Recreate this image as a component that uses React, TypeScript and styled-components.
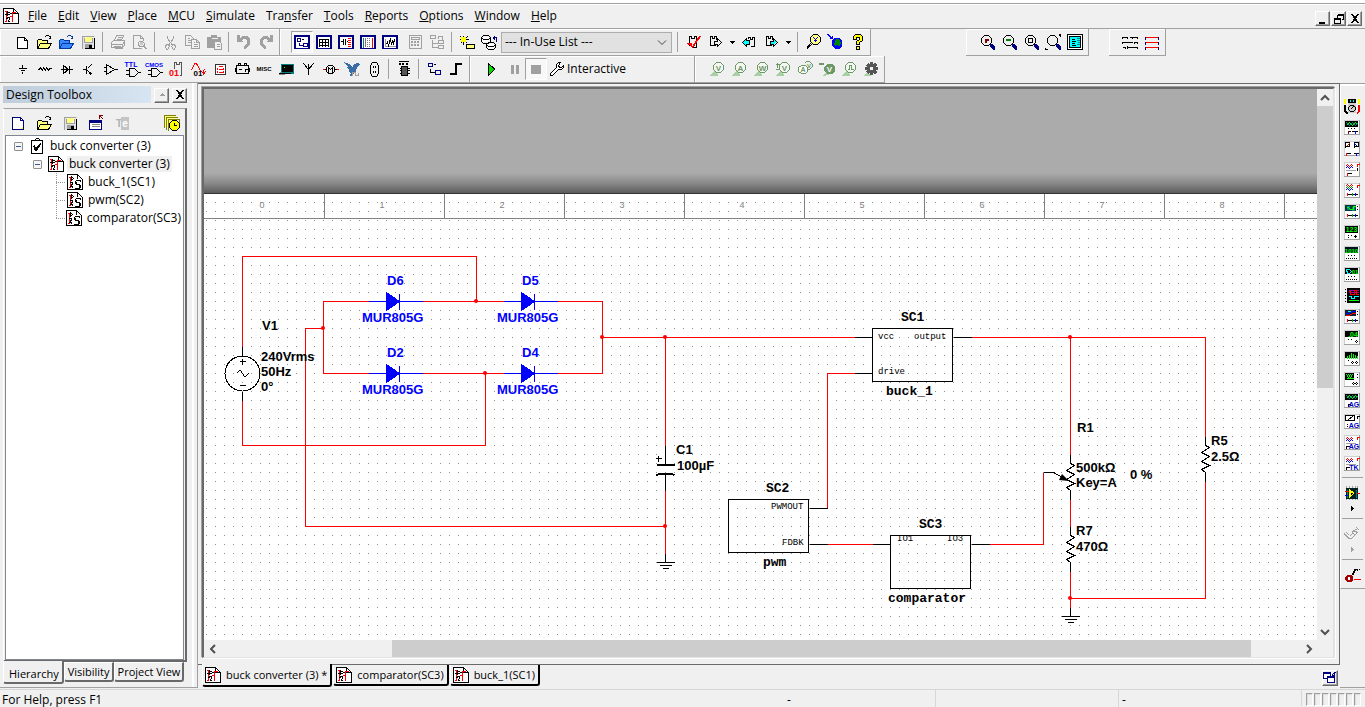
import React from 'react';
import styled, { createGlobalStyle, css } from 'styled-components';

const face = '#f0f0f0';
const edge = '#a0a0a0';
const dark = '#696969';

const Global = createGlobalStyle`
  * { box-sizing: border-box; }
  html, body { margin: 0; }
  body { font: 12px/16px "Open Sans", "Noto Sans", sans-serif; color: #000; background: ${face}; }
  button, select { font: inherit; color: inherit; }
`;

/* ---------- icons: 16x16 layered pixel drawings ---------- */

type Layer = ['s' | 'f', string, string] | ['t', string, string, number, number, number];

const K = '#000';
const N = '#000080';
const G = '#a0a0a0';
const R = '#f00';
const B = '#00f';
const L = '#0f0';
const GP = '#6f9868';

const sheetArt: Layer[] = [
  ['f', '#fff', 'M0 0H11L16 5V16H0Z'],
  ['s', K, 'M0 0H10L15 5V15H0Z M10 0V5H15'],
  ['s', R, 'M1 3H3V13H1 M9 13V4H12 M6 8H9'],
  ['s', K, 'M1 6H4 M4 3V7L7 5L4 3 M6 5H8 M4 9L3 11 M4 9H6V11L4 14 M5 12L7 14'],
];
const subSheetArt: Layer[] = [
  ['f', '#fff', 'M0 0H11L16 5V16H0Z'],
  ['s', K, 'M0 0H10L15 5V15H0Z M10 0V5H15'],
  ['s', R, 'M1 3H3V13H1'],
  ['s', K, 'M4 2V6L6 4Z M2 8H5 M5 9L3 13 M4 11L6 14'],
  ['f', '#fff', 'M7 5H15V15H7Z'],
  ['s', K, 'M13 7V6H9L8 7V9L9 10H12L13 11V13L12 14H8V13 M9 7V10 M12 10V13'],
];
const panel = (screen: string, inner: Layer[], foot: Layer[]): Layer[] => [
  ['f', '#fff', 'M0 0H16V15H0Z'],
  ['f', '#a0a0a0', 'M15 0H16V15H0V14H15Z'],
  ['f', '#d0d0d0', 'M0 0H15V1H1V14H0Z'],
  ['f', screen, 'M1 1H14V7H1Z'],
  ...inner,
  ...foot,
];
const rgbDots: Layer[] = [
  ['s', K, 'M2 11H13'],
  ['f', R, 'M3 10h1v3h-1z'],
  ['f', '#0a0', 'M8 10h1v3h-1z'],
  ['f', B, 'M11 10h1v3h-1z'],
];
const binDots: Layer[] = [['f', K, 'M4 9h1v1h-1z M7 9h1v1h-1z M10 9h1v1h-1z M2 12h1v1h-1z M4 12h1v1h-1z M6 12h1v1h-1z M8 12h1v1h-1z M10 12h1v1h-1z M12 12h1v1h-1z']];
const probe = (letter: string, extra: Layer[] = []): Layer[] => [
  ['f', '#a9cfa5', 'M1 15L5 10L9 14V15Z'],
  ['f', '#f4f8f3', 'M6 2H12L14 5V9L12 12H7L4 9V5Z'],
  ['s', GP, 'M7 1H11L14 4V8L11 11H7L4 8V4Z'],
  ['t', GP, letter, 9.5, 9.5, 8],
  ...extra,
];
const windowFrame: Layer[] = [
  ['f', '#fff', 'M0 1H16V15H0Z'],
  ['s', N, 'M0 1H15V14H0Z M0 2H15 M1 1V14 M14 1V14'],
];
const lens = (inner: Layer[]): Layer[] => [
  ['s', K, 'M5 1H9L12 4V8L9 11H5L2 8V4Z'],
  ['f', N, 'M11 10H13L16 13V16H14L11 13Z'],
  ...inner,
];
const gate: Layer[] = [
  ['s', K, 'M1 9H5 M1 13H5 M5 7H10L14 11L10 15H5Z M14 11H16'],
];

const art: Record<string, Layer[]> = {
  sheet: sheetArt,
  subSheet: subSheetArt,
  newFile: [['f', '#fff', 'M3 3H11L14 6V15H3Z'], ['s', K, 'M3 3H10L13 6V14H3Z M10 3V6H13']],
  newSheet: [
    ['f', '#fff', 'M2 2H10L14 6V15H2Z'],
    ['s', N, 'M2 2H10L13 5V14H2Z M10 2V5H13'],
    ['f', '#ff0', 'M13 11V14H10Z'],
  ],
  open: [
    ['f', '#ffff80', 'M1 15V6H6L7 7H12V10H16L12 15Z'],
    ['s', K, 'M1 14V6L2 5H5L6 6H11V9 M1 14L4 9H15L12 14Z M8 3L10 1H12L14 3 M14 1V4 M12 4H14'],
  ],
  openBlue: [
    ['f', '#3a86ff', 'M1 15V6H6L7 7H12V10H16L12 15Z'],
    ['s', '#003a9c', 'M1 14V6L2 5H5L6 6H11V9 M1 14L4 9H15L12 14Z M8 3L10 1H12L14 3 M14 1V4 M12 4H14'],
  ],
  save: [
    ['f', '#e4e4e4', 'M2 2H15V15H2Z'],
    ['f', '#fff', 'M5 2H13V8H5Z'],
    ['f', '#ffff80', 'M5 4L8 2H12V5L9 8H5Z'],
    ['s', G, 'M2 14V2H13 M4 3V8H12V3'],
    ['s', K, 'M14 3V14H4'],
    ['f', '#a0a0a0', 'M5 10H12V14H5Z'],
    ['f', K, 'M9 11H12V14H9Z'],
  ],
  print: [
    ['s', G, 'M4 6L6 1H13L11 6 M7 3H11 M6 5H10 M1 8L3 6H14V11L12 13H1Z M1 10H12V13 M12 10L14 7 M3 12H10 M4 14H12'],
  ],
  preview: [
    ['s', G, 'M9 14H1V1H8L11 4V6 M8 1V4H11 M7 7H10L12 9V11L10 12H7L6 10V8Z M12 12L15 15 M12 13L14 15'],
    ['f', '#c8c8c8', 'M8 8H11V11H8Z'],
  ],
  cut: [['s', G, 'M5 1V4L8 8L11 12 M11 1V4L8 8L5 12 M4 10H6L7 12L5 15H4L3 12Z M11 10H12L13 12L12 15H11L9 12Z']],
  copy: [
    ['s', G, 'M1 1H6L9 4V11H1Z M3 4H5 M3 6H7 M3 8H7'],
    ['f', face, 'M7 5H15V15H7Z'],
    ['s', G, 'M7 5H12L15 8V14H7Z M12 5V8H15 M9 8H10 M9 10H13 M9 12H13'],
  ],
  paste: [
    ['f', G, 'M1 3H5V1H11V3H15V14H1Z'],
    ['s', face, 'M5 4H11'],
    ['f', face, 'M8 7H13L16 10V16H8Z'],
    ['s', G, 'M8 7H13L15 9V15H8Z M10 10H13 M10 12H13'],
  ],
  undo: [['f', G, 'M1 1H4V4L7 2H11L14 5V10L10 15H8V13L11 9V6L9 5H7L6 7L8 8H1Z']],
  redo: [['f', G, 'M15 1H12V4L9 2H5L2 5V10L6 15H8V13L5 9V6L7 5H9L10 7L8 8H15Z']],
  hierarchy: [...windowFrame, ['s', N, 'M3 4H6V7H3Z M9 9H13V12H9Z M5 8V11H9'], ['s', K, 'M7 5H9']],
  grid: [...windowFrame, ['s', K, 'M3 4V12 M6 4V12 M9 4V12 M12 4V12 M3 5H12 M3 8H12 M3 11H12']],
  netlist: [...windowFrame, ['s', K, 'M2 7H4 M5 4V10 M7 4V10 M8 7H9'], ['f', R, 'M10 4h3v1h-3z M10 6h3v1h-3z M10 8h3v1h-3z M10 10h3v1h-3z M10 12h3v1h-3z']],
  bom: [...windowFrame, ['s', '#008080', 'M3 3V13'], ['s', R, 'M12 3V13'], ['f', '#777', 'M5 4h1v9h-1z M7 4h1v9h-1z M9 4h1v9h-1z'], ['s', '#fff', 'M5 5H10 M5 7H10 M5 9H10 M5 11H10']],
  grapher: [...windowFrame, ['s', '#999', 'M3 4V12H13'], ['s', K, 'M4 10L5 8L6 11L8 4L9 10L10 7L11 9L12 5']],
  calc: [['s', G, 'M2 1H14V14H2Z M4 3H12V5H4Z'], ['f', G, 'M4 7h2v2h-2z M7 7h2v2h-2z M10 7h2v2h-2z M4 10h2v2h-2z M7 10h2v2h-2z M10 10h2v2h-2z']],
  branch: [['s', G, 'M1 1H6V4H1Z M3 5V13H8 M3 9H8 M9 6H14V9H9Z M9 11H14V14H9Z M8 2H13V5 M9 1V4']],
  wizard: [['s', K, 'M4 1V10 M0 5H9 M1 2L8 9 M8 2L1 9'], ['f', '#ff0', 'M2 3H7V8H2Z'], ['f', '#ffff80', 'M7 11H15V15H7Z'], ['s', K, 'M7 10H15V14H7Z']],
  database: [
    ['f', '#fff', 'M1 3H8V8H1Z M6 10H13V15H6Z'],
    ['s', K, 'M2 1H7L9 3V7L7 9H2L0 7V3Z M0 3L2 5H7L9 3 M7 8H12L14 10V13L12 15H7L5 13V10Z M5 10L7 12H12L14 10'],
    ['s', N, 'M11 3H15 M12 2V4 M13 1V5 M15 3V7'],
  ],
  erc: [['s', K, 'M4 11V2H6V4H9V2H11V13H6'], ['s', R, 'M15 2L7 13L3 9 M14 2L7 12L2 9'], ['f', R, 'M3 9H7V14Z']],
  toPcb: [['s', K, 'M3 11V2H5V4H7V2H9V5 M3 11H8 M7 7H10V4L14 8L10 12V10H7Z']],
  backAnn: [['f', '#0ff', 'M1 8L5 5V7H9V10H5V12Z'], ['s', K, 'M1 8L5 4V6H8V10H5V12Z M7 4V3H9V5H11V3H13V12H9']],
  forwardAnn: [['f', '#0ff', 'M7 7H10V5L14 8L10 11V10H7Z'], ['s', K, 'M3 11V2H5V4H7V2H9V5 M3 11H8 M7 7H10V4L14 8L10 12V10H7Z']],
  caret: [['f', K, 'M5 7H11L8 10Z']],
  find: [['f', '#ffff80', 'M8 1H13L15 4V8L12 11H8L5 8V4Z'], ['s', K, 'M8 0H12L15 3V7L12 10H8L5 7V3Z M5 9L1 14 M6 10L1 15'], ['s', B, 'M8 3L10 5L12 3 M8 7L10 5L12 7 M10 4V7']],
  web: [['f', B, 'M7 4H12L15 7V12L12 15H8L5 12V7Z'], ['f', '#080', 'M9 5H12L14 9L12 13L10 11L8 12L6 10L8 8Z'], ['s', B, 'M0 0L5 4 M5 1V4H2 M1 0L4 3']],
  help: [['f', '#ff0', 'M4 5V2L6 0H11L13 2V6L10 9V11H7V8L10 5V3H8L7 5Z M7 12H10V15H7Z'], ['s', K, 'M4 5V2L6 0H11L13 2V6L10 8V10H7V7L10 5V3H7V5H4Z M7 12H10V15H7Z']],
  zoomIn: lens([['s', '#800000', 'M5 6H9 M7 4V8 M6 4V8 M5 5H9']]),
  zoomOut: lens([['f', '#008000', 'M5 5H10V7H5Z']]),
  zoomArea: lens([['s', K, 'M5 4H9V8H5Z']]),
  zoomFit: lens([['s', K, 'M13 0H15V2 M15 0L13 2 M0 13V15H2']]),
  fullScreen: [['f', '#fff', 'M1 1H15V15H1Z'], ['s', K, 'M0 0H15V15H0Z M2 2H13V13H2Z'], ['f', '#0ff', 'M3 3H13V13H3Z'], ['s', K, 'M4 5H7 M4 7H8 M4 9H7 M4 11H8'], ['s', '#008080', 'M9 4H12 M9 6H12 M10 8H12 M9 10H12']],
  wires: [['s', K, 'M0 3H5 M7 3H9 M10 3H15 M5 2V4 M10 2V4 M0 8H10 M12 7V9 M12 8H15 M0 2V4 M0 7V9 M15 2V4 M15 7V9 M0 13H2 M5 13H15 M3 12V14 M15 12V14 M4 12H5V14H4']],
  buses: [['s', R, 'M1 3H14 M1 8H14 M1 13H14'], ['s', N, 'M1 2V5 M14 2V5 M1 7V10 M14 7V10 M1 12V15 M14 12V15']],
  battery: [['s', K, 'M8 3V6 M4 7H12 M6 9H10 M8 10V12']],
  resistor: [['s', K, 'M1 8H3L4 6L6 9L7 6L9 9L10 6L12 9L13 7H15']],
  diode: [['s', K, 'M2 8H14 M5 4V12L10 8Z M11 4V12']],
  transistor: [['s', K, 'M2 8H6 M6 4V12 M7 7L11 3 M7 9L11 13 M10 10V13 M8 12H11']],
  opamp: [['s', K, 'M4 3V13L12 8Z M1 6H4 M1 10H4 M12 8H15']],
  ttl: [['t', B, 'TTL', 7, 6, 7], ...gate],
  cmos: [['t', B, 'CMOS', 8, 6, 6], ...gate],
  mixedPort: [['s', '#555', 'M6 7V1H8V3H11V1H13V14H11'], ['t', R, '01', 6, 15, 9]],
  mixed: [['s', R, 'M1 9L4 2H6L10 9L12 11L14 8'], ['t', K, '01', 8, 15, 8], ['s', R, 'M13 9V13L15 10']],
  indicator: [['f', '#fff', 'M3 3H14V14H3Z'], ['s', '#333', 'M3 3H13V13H3Z'], ['s', R, 'M6 5H10 M6 8H10 M6 11H10 M5 6V8 M11 6V8 M5 9V11 M11 9V11']],
  power: [['s', K, 'M2 4H14V12H2Z M4 8H7 M10 8H13 M11 7V10 M4 3V2H6V3 M10 3V2H12V3 M1 6V10 M15 6V10']],
  misc: [['t', K, 'MISC', 8, 10, 6]],
  peripheral: [['f', '#008080', 'M3 3H16V13H3Z'], ['f', K, 'M4 4H15V11H4Z'], ['s', '#888', 'M0 13H6 M1 11H3'], ['f', L, 'M6 6h1v1h-1z'], ['s', K, 'M0 12H12']],
  rf: [['s', K, 'M8 4V13 M3 2L8 8L13 2 M8 2V4']],
  motor: [['s', R, 'M0 8H2 M14 8H16'], ['s', K, 'M2 8H4 M12 8H14 M6 4H10L12 6V10L10 12H6L4 10V6Z M6 11V6L8 8L10 6V11']],
  niBird: [['f', '#3a6ea5', 'M0 1L5 3L9 6L10 3L13 2L16 3L13 6L12 10L9 14L6 15L7 12L4 10L6 9L2 6L4 6Z'], ['s', G, 'M8 14V11H11V14H14V11']],
  connector: [['s', K, 'M6 1H10L12 4V12L10 15H6L4 12V4Z M7 4V6 M9 4V6 M7 9V11 M9 9V11']],
  mcu: [['f', K, 'M3 0H13V1H3Z M3 2H5V4H3Z M6 2H8V4H6Z M10 2H12V4H10Z'], ['f', '#555', 'M5 6H12V15H5Z'], ['s', K, 'M5 5H11V14H5Z M3 7H5 M3 9H5 M3 12H5 M11 7H13 M11 9H13 M11 12H13']],
  hierBlock: [['s', N, 'M2 2H6V5H2Z M9 9H14V13H9Z'], ['s', K, 'M4 7V11H8'], ['s', K, 'M7 3H9']],
  bus: [['f', K, 'M2 12H7V2H14V4H9V14H2Z']],
  play: [['f', K, 'M4 2L12 8L4 15Z'], ['f', '#00e000', 'M5 4L10 8L5 13Z']],
  pause: [['f', G, 'M5 4H8V13H5Z M10 4H13V13H10Z']],
  stop: [['f', G, 'M3 4H13V13H3Z']],
  wrench: [['f', '#fff', 'M9 2H12V6H14V8L12 9H9L3 15H1V13L7 7V4Z'], ['s', K, 'M11 1H9L7 3V6L1 12V14H3L9 8H12L14 6V4L12 6H10L9 4Z']],
  probeV: probe('V'),
  probeA: probe('A'),
  probeW: probe('W'),
  probeDiff: probe('V', [['s', GP, 'M0 3H4 M2 1V6 M0 8H4']]),
  probeVA: [
    ['s', GP, 'M9 0H12L15 3V5L12 8H9 M9 0L7 2'],
    ['t', GP, 'V', 12, 7, 6],
    ['f', '#fff', 'M3 5H8L10 8V11L8 13H4L1 10Z'],
    ['s', GP, 'M4 4H8L10 6V10L8 12H4L1 10V6Z'],
    ['t', GP, 'A', 6, 11, 7],
  ],
  probeRef: [['f', '#a9cfa5', 'M4 15L7 11L10 14Z'], ['f', GP, 'M8 3H13L16 6V10L13 13H8L5 10V6Z M0 2H5V4H0Z'], ['t', '#fff', 'V', 10.5, 11, 8]],
  probeDigital: probe('', [['s', GP, 'M6 8H8V4H10V8H12']]),
  gear: [['f', '#a9cfa5', 'M0 15L4 11L8 15Z'], ['f', '#555', 'M7 1H10V3L12 2L14 4L13 6H15V9H13L14 11L12 13L10 12V14H7V12L5 13L3 11L4 9H2V6H4L3 4L5 2L7 3Z'], ['f', face, 'M7 6H10V9H7Z']],
  blocksWindow: [['f', '#fff', 'M1 5H14V15H1Z'], ['s', N, 'M1 5H13V14H1Z M1 6H13 M1 7H13'], ['s', '#888', 'M3 9H11 M3 11H11'], ['s', '#800000', 'M15 4L11 0 M11 0V3 M11 0H14']],
  rename: [['t', '#b4b4b4', 'T', 5, 12, 11], ['f', '#c4c4c4', 'M7 2H15V15H7Z'], ['t', '#fff', 'e', 11, 12, 10]],
  history: [
    ['f', '#ffff80', 'M0 0H11V12H0Z'],
    ['s', '#808000', 'M0 12V0H11 M2 14V2H13 M4 15V4H15V7'],
    ['f', '#ff0', 'M8 6H13L15 8V13L13 15H8L6 13V8Z'],
    ['s', K, 'M8 5H12L15 8V12L12 15H8L5 12V8Z M10 7V10H12'],
  ],
  checkSheet: [
    ['f', '#fff', 'M3 2H14V15H3Z'],
    ['s', K, 'M2 2H13V15H2Z M5 2L7 0H9L11 2'],
    ['f', K, 'M4 8L6 7L7 10L11 5L12 6L8 13H6Z'],
  ],
  cascade: [['f', '#fff', 'M1 2H10V10H1Z'], ['s', N, 'M1 2H8V8H1Z M1 3H8'], ['f', '#fff', 'M5 6H13V13H5Z'], ['s', N, 'M5 6H12V12H5Z M5 7H12 M12 1V5H9 M14 1L10 4']],
  /* instruments */
  multimeter: [
    ['f', '#ff0', 'M0 0H2V5H0Z M14 0H16V5H14Z'],
    ['f', K, 'M0 6H2V12L4 14L3 15L0 13Z'],
    ['f', R, 'M14 6H16V13L13 15L12 14L14 12Z'],
    ['f', '#d0d0d0', 'M4 0H12V14H4Z'],
    ['f', K, 'M4 0H12V4H4Z'],
    ['f', '#0ff', 'M6 1h1v2h-1z M9 1h1v2h-1z'],
    ['s', K, 'M6 6H9L11 8V10L9 12H6L4 10V8Z M6 10L9 7'],
  ],
  functionGen: panel(K, [['s', '#008080', 'M2 2L5 5L8 2L11 5L13 3'], ['s', L, 'M2 5L5 2L8 5L11 2L13 4']], [['s', K, 'M3 11H13'], ['s', '#800', 'M4 10V13'], ['s', B, 'M11 10V13'], ['f', '#fff', 'M7 11h1v1h-1z'], ['f', K, 'M4 8h1v1h-1z M7 8h1v1h-1z M10 8h1v1h-1z']]),
  wattmeter: panel('#fff', [['s', K, 'M1 1H5V5H1Z M10 1H14V5H10Z M1 0V6 M10 0V6'], ['s', R, 'M2 5L5 2'], ['s', B, 'M10 2L13 5']], [['s', K, 'M1 12H6 M9 12H14'], ['s', R, 'M2 11V14'], ['s', B, 'M12 11V14']]),
  scope2: panel('#fff', [['s', R, 'M1 4L3 2L5 4L7 2L9 4'], ['s', B, 'M1 6L3 4L5 6L7 4L9 6'], ['s', R, 'M12 2H15 M13 1V4'], ['s', K, 'M13 5V8']], [['s', G, 'M1 8H11'], ['s', K, 'M2 11H7'], ['s', R, 'M3 10V13']]),
  scope4: panel('#fff', [['s', R, 'M1 3L3 1L5 3L7 1L9 3'], ['s', '#0a0', 'M1 5L3 3L5 5L7 3L9 5'], ['s', B, 'M1 7L3 5L5 7L7 5L9 7'], ['s', R, 'M12 2H15 M13 1V4']], rgbDots),
  bode: panel('#003838', [['f', '#008080', 'M3 2H6V6H3Z M8 3H11V7H8Z'], ['s', L, 'M2 3H4L6 5H9V2H11'], ['f', '#fff', 'M12 1H14V7H12Z'], ['f', K, 'M13 2h1v1h-1z M13 5h1v1h-1z']], rgbDots),
  counter: panel(K, [['f', K, 'M1 1H14V8H1Z'], ['t', L, '123', 7.5, 7, 7]], [['f', K, 'M4 10h1v1h-1z M4 12h1v1h-1z M7 10h1v1h-1z M11 10h1v3h-1z M10 11h3v1h-3z']]),
  wordGen: panel('#012', [['t', L, '1010', 7.5, 7, 6]], binDots),
  logicConv: panel(K, [['s', '#0ff', 'M2 2H5L7 4L5 6H3Z'], ['t', L, '01', 11, 7, 6]], binDots),
  logicAnalyzer: [['f', K, 'M3 0H16V15H3Z'], ['s', '#a0a', 'M4 2H14 M4 4H14'], ['s', R, 'M4 3H6V6H10V2H12V6H14'], ['s', '#0ff', 'M4 8H7V10H10V8H14'], ['s', L, 'M4 12H14'], ['f', K, 'M1 1h1v1h-1z M1 4h1v1h-1z M1 7h1v1h-1z M1 10h1v1h-1z M1 13h1v1h-1z']],
  ivAnalyzer: panel('#123', [['s', '#00f', 'M1 4H5L8 2H11'], ['s', R, 'M1 6H5L8 4H11'], ['s', '#0ff', 'M3 2H6'], ['f', '#fff', 'M12 1H14V7H12Z'], ['f', K, 'M13 2h1v1h-1z M13 5h1v1h-1z']], rgbDots),
  distortion: panel(K, [['t', L, '.04', 9, 7, 7]], [['f', K, 'M4 9h1v1h-1z M7 9h1v1h-1z'], ['s', K, 'M12 10L13 11L12 12L11 11Z']]),
  spectrum: panel(K, [['s', L, 'M3 4V7 M5 3V7 M7 1V7 M9 2V7 M11 3V7 M13 4V7']], [['s', K, 'M8 10L9 11L8 12L7 11Z M12 10L13 11L12 12L11 11Z'], ['f', K, 'M4 9h1v1h-1z']]),
  network: panel('#fff', [['f', K, 'M1 1H10V8H1Z'], ['s', L, 'M2 2L4 5L6 2L8 5 M2 5L4 2L6 5L8 2 M2 6H9'], ['f', K, 'M13 2h1v1h-1z M13 5h1v1h-1z']], [['s', K, 'M9 10L10 11L9 12L8 11Z M12 10L13 11L12 12L11 11Z']]),
  agGen: panel(K, [['s', '#008080', 'M2 2L5 5L8 2L11 5L13 3'], ['s', L, 'M2 5L5 2L8 5L11 2L13 4']], [['s', K, 'M3 11H6 M4 10V13'], ['t', '#00c', 'AG', 10, 14, 7]]),
  agMeter: panel('#fff', [['s', K, 'M1 1H10V6H1Z M3 6L9 1 M12 2H15 M13 1V4']], [['f', K, 'M3 10h1v1h-1z M3 12h1v1h-1z'], ['t', '#00c', 'AG', 10, 14, 7]]),
  agScope: panel('#fff', [['s', R, 'M1 4L3 2L5 4L7 2L9 4 M12 2H15 M13 1V4'], ['s', B, 'M1 6L3 4L5 6L7 4L9 6']], [['s', G, 'M1 8H11'], ['s', K, 'M1 11H5 M2 10V13'], ['t', '#00c', 'AG', 10, 14, 7]]),
  tkScope: panel('#fff', [['s', R, 'M1 4L3 2L5 4L7 2L9 4 M12 2H15 M13 1V4'], ['s', B, 'M1 6L3 4L5 6L7 4L9 6']], [['s', G, 'M1 8H11'], ['s', K, 'M1 11H5 M2 10V13'], ['t', '#00c', 'TK', 10, 14, 7]]),
  labview: [['f', G, 'M2 1h1v14h-1z M5 1h1v14h-1z M8 1h1v14h-1z M11 1h1v14h-1z M13 1h1v14h-1z'], ['f', '#022', 'M2 3H14V14H2Z'], ['s', '#008080', 'M3 4V12 M12 4V12'], ['f', '#ff0', 'M5 4L11 8L5 13Z'], ['s', K, 'M6 8H8 M7 7V9'], ['s', R, 'M0 6H4 M12 8H15'], ['s', B, 'M0 10H4']],
  rightDark: [['f', K, 'M7 4L10 7.5L7 11Z']],
  rightDim: [['f', G, 'M7 4L10 7.5L7 11Z']],
  clampDim: [['s', G, 'M0 7L5 12L7 12L13 6L9 4 M5 10L8 7L9 4 M2 6L5 9 M9 4L14 2 M8 4V7L11 8 M12 1L15 4 M0 8L5 13']],
  currentClamp: [['f', '#a00000', 'M3 8H7L9 10V13L7 15H3L1 13V10Z'], ['f', '#fff', 'M4 10H6V13H4Z'], ['s', R, 'M9 12H16'], ['s', K, 'M7 8L9 5L10 2 M8 8L10 5L11 2H13 M13 1V3 M15 1V2']],
  min: [['f', K, 'M4 11H10V13H4Z']],
  restore: [['s', K, 'M6 3H12V8H10 M6 4H12 M6 3V6 M3 7H9V12H3Z M3 8H9']],
  close: [['f', K, 'M4 3H6L8 6L10 3H12L9 7.5L12 12H10L8 9L6 12H4L7 7.5Z']],
  up: [['f', G, 'M5 9H11L8 6Z']],
};

const Svg = styled.svg`
  display: block;
  flex: none;
`;

function Icon({ name }: { name: string }) {
  return (
    <Svg width="16" height="16" viewBox="0 0 16 16" aria-hidden="true" overflow="visible">
      {art[name].map((l, i) =>
        l[0] === 't' ? (
          <text key={i} x={l[3]} y={l[4]} fontSize={l[5]} fill={l[1]} textAnchor="middle" fontFamily="Liberation Sans, sans-serif" fontWeight="bold">
            {l[2]}
          </text>
        ) : l[0] === 's' ? (
          <path key={i} d={l[2]} fill="none" stroke={l[1]} transform="translate(.5 .5)" shapeRendering="crispEdges" />
        ) : (
          <path key={i} d={l[2]} fill={l[1]} shapeRendering="crispEdges" />
        ),
      )}
    </Svg>
  );
}

/* ---------- shell ---------- */

const Page = styled.div`
  display: flex;
  flex-direction: column;
  min-height: 100vh;
  background: ${face};
`;

const MenuBar = styled.nav`
  display: flex;
  align-items: center;
  height: 26px;
  margin-top: 3px;
  padding: 0 3px;
  border-top: 1px solid ${edge};
  border-bottom: 1px solid ${edge};
  box-shadow: inset 0 1px #fff, 0 -3px #fff;
`;

const MenuList = styled.div`
  display: flex;
  flex: 1;
  margin-left: 4px;
`;

const MenuItem = styled.button`
  border: 0;
  padding: 0 6px 0 5px;
  background: none;
`;

const bevel = css`
  border: 1px solid;
  border-color: #fff ${dark} ${dark} #fff;
  box-shadow: inset -1px -1px ${edge};
  background: ${face};
`;

const WindowButton = styled.button`
  display: flex;
  align-items: center;
  justify-content: center;
  width: 15px;
  height: 15px;
  padding: 0;
  margin-left: 1px;
  overflow: hidden;
  ${bevel}
`;

const WindowButtons = styled.div`
  display: flex;
  align-self: flex-end;
  padding-bottom: 2px;
`;

const ToolRow = styled.div`
  display: flex;
  height: 27px;
`;

const Toolbar = styled.div<{ $lead?: number; $gap?: number }>`
  display: flex;
  align-items: center;
  padding-left: ${(p) => p.$lead ?? 11}px;
  padding-right: 2px;
  margin-left: ${(p) => p.$gap ?? 0}px;
  border-right: 1px solid ${edge};
  border-bottom: 1px solid ${edge};
  box-shadow: inset 1px 1px #fff;
`;

const ToolButton = styled.button<{ $on?: boolean; $slim?: boolean }>`
  display: flex;
  align-items: center;
  justify-content: center;
  width: ${(p) => (p.$slim ? 12 : 22)}px;
  height: 22px;
  padding: 0;
  border: 1px solid;
  border-color: ${(p) => (p.$on ? `${edge} #fff #fff ${edge}` : 'transparent')};
  background: ${(p) => (p.$on ? '#f8f8f8' : 'none')};
  overflow: hidden;
`;

const Separator = styled.span`
  width: 1px;
  height: 20px;
  margin: 0 4px 0 3px;
  background: ${edge};
`;

const Gap = styled.span`
  width: 3px;
`;

const SelectWrap = styled.label`
  position: relative;
  display: flex;
  margin: 0 2px 0 1px;
  color: #444;
`;

const PartSelect = styled.select`
  width: 171px;
  height: 21px;
  padding: 0 3px;
  border: 1px solid #adadad;
  border-radius: 0;
  background: #e1e1e1;
  appearance: none;
  color: #000;
`;

const Chevron = styled.svg`
  position: absolute;
  right: 5px;
  top: 7px;
  pointer-events: none;
`;

const TextButton = styled.button`
  display: flex;
  align-items: center;
  gap: 2px;
  width: 145px;
  padding: 0 0 0 2px;
  border: 0;
  background: none;
`;

const Main = styled.div`
  display: flex;
  flex: 1;
  min-height: 0;
`;

/* ---------- design toolbox ---------- */

const Dock = styled.aside`
  display: flex;
  flex-direction: column;
  width: 198px;
  flex: none;
  padding: 3px 10px 3px 3px;
  border-right: 1px solid ${edge};
  border-bottom: 1px solid ${edge};
  box-shadow: inset -3px 0 ${face}, inset -5px 0 #fff;
`;

const DockTitle = styled.header`
  display: flex;
  align-items: center;
  gap: 2px;
  height: 18px;
`;

const DockName = styled.h2`
  flex: 1;
  margin: 0 0 1px;
  padding: 0 3px;
  font: inherit;
  line-height: 17px;
  background: linear-gradient(90deg, #bfcddb, #d7e4f2);
`;

const DockBody = styled.div`
  display: flex;
  flex-direction: column;
  flex: 1;
  margin-top: 4px;
  padding: 2px 1px 0;
  border: solid;
  border-width: 1px 2px 2px 1px;
  border-color: ${edge} ${dark} ${dark} #fff;
`;

const DockTools = styled.div`
  display: flex;
  align-items: center;
  gap: 4px;
  height: 24px;
  padding: 0 1px 0 2px;
`;

const Spacer = styled.span`
  flex: 1;
`;

const Tree = styled.ul`
  flex: 1;
  margin: 0;
  padding: 1px 0;
  border: 1px solid #828790;
  background: #fff;
  list-style: none;
`;

const Branch = styled.li<{ $depth: number }>`
  display: flex;
  align-items: center;
  height: 18px;
  padding-left: ${(p) => 7 + p.$depth * 19}px;
`;

const Expander = styled.button`
  width: 9px;
  height: 9px;
  padding: 0;
  margin: 0 6px 0 1px;
  border: 1px solid #919191;
  border-radius: 1px;
  background: linear-gradient(#3b5a9a, #3b5a9a) center / 5px 1px no-repeat #f6f6f6;
`;

const Elbow = styled.span<{ $last?: boolean }>`
  align-self: stretch;
  width: 11px;
  margin-left: 5px;
  background:
    repeating-linear-gradient(90deg, #999 0 1px, transparent 1px 2px) 0 9px / 10px 1px no-repeat,
    repeating-linear-gradient(#999 0 1px, transparent 1px 2px) 0 0 / 1px ${(p) => (p.$last ? 10 : 18)}px no-repeat;
`;

const BranchName = styled.span<{ $on?: boolean }>`
  padding: 0 2px;
  margin-left: 3px;
  white-space: nowrap;
  background: ${(p) => (p.$on ? face : 'none')};
`;

const BottomTabs = styled.div`
  display: flex;
  align-items: flex-start;
  height: 22px;
`;

const DockTab = styled.button<{ $on?: boolean }>`
  height: ${(p) => (p.$on ? 23 : 20)}px;
  margin-top: ${(p) => (p.$on ? -1 : 0)}px;
  padding: ${(p) => (p.$on ? '3px 3px 0 5px' : '0 2px 0 3px')};
  border: solid;
  border-width: ${(p) => (p.$on ? '0 2px 2px 1px' : '1px 2px 2px 1px')};
  border-color: #fff ${dark} ${dark} #fff;
  border-radius: 0 0 3px 3px;
  background: ${face};
  font-size: 11px;
  line-height: 15px;
  white-space: nowrap;
`;

/* ---------- document area ---------- */

const Workspace = styled.main`
  display: flex;
  flex-direction: column;
  flex: 1;
  min-width: 0;
`;

const DocFrame = styled.section`
  display: flex;
  flex-direction: column;
  flex: 1;
  padding: 3px 4px 6px;
  border: solid ${dark};
  border-width: 1px 1px 1px 0;
`;

const DocWindow = styled.div`
  display: grid;
  grid-template-columns: minmax(0, 1fr) 16px;
  grid-template-rows: minmax(0, 1fr) 17px;
  flex: 1;
  border: solid;
  border-width: 2px 2px 1px;
  border-color: ${dark} #e3e3e3 #e3e3e3 ${dark};
  box-shadow: -1px -1px ${edge}, 1px 1px #fff;
`;

const Viewport = styled.div`
  display: flex;
  flex-direction: column;
  min-width: 0;
  background: #ababab;
`;

const Backdrop = styled.div`
  height: 105px;
  border-bottom: 1px solid #333;
  background: linear-gradient(#ababab 84px, #8a8a8a 94px, #5c5c5c);
`;

const Sheet = styled.div`
  display: grid;
  flex: 1;
  min-height: 446px;
  background: #fff;
  overflow: hidden;
`;

const ScrollBar = styled.div<{ $row?: boolean }>`
  display: flex;
  flex-direction: ${(p) => (p.$row ? 'row' : 'column')};
  background: ${face};
`;

const ScrollArrow = styled.button`
  display: flex;
  align-items: center;
  justify-content: center;
  flex: 0 0 17px;
  padding: 0;
  border: 0;
  background: none;
`;

const Thumb = styled.span<{ $share: number; $empty?: boolean }>`
  flex: ${(p) => p.$share};
  background: ${(p) => (p.$empty ? 'none' : '#cdcdcd')};
`;

const DocTabs = styled.div`
  display: flex;
  align-items: flex-start;
  height: 23px;
  padding: 0 2px 0 4px;
`;

const DocTab = styled.button<{ $on?: boolean }>`
  display: flex;
  align-items: center;
  gap: 5px;
  height: ${(p) => (p.$on ? 23 : 21)}px;
  margin-top: ${(p) => (p.$on ? -1 : 0)}px;
  margin-right: 1px;
  padding: 0 3px 0 2px;
  border: solid;
  border-width: 0 2px 2px 1px;
  border-color: #000 #000 #000 #fff;
  border-radius: 0 0 3px 3px;
  background: ${face};
  font-size: 11px;
  white-space: nowrap;
`;

const CornerButton = styled.button`
  display: flex;
  align-items: center;
  justify-content: center;
  width: 16px;
  height: 16px;
  margin: 5px 0 0 auto;
  padding: 0;
  overflow: hidden;
  ${bevel}
`;

const Instruments = styled.aside`
  display: flex;
  flex-direction: column;
  flex: none;
  width: 25px;
  border-top: 1px solid ${edge};
  border-bottom: 1px solid ${edge};
`;

const InstrumentStrip = styled.div`
  display: flex;
  flex-direction: column;
  padding: 12px 0 3px;
  border-left: 1px solid #fff;
  border-bottom: 1px solid ${edge};
  box-shadow: inset 0 2px #fff;
`;

const InstrumentButton = styled.button<{ $short?: boolean }>`
  display: flex;
  align-items: center;
  justify-content: center;
  width: 22px;
  height: ${(p) => (p.$short ? 12 : 21)}px;
  padding: 0;
  border: 0;
  background: none;
  overflow: hidden;
`;

const StripRule = styled.span`
  height: 1px;
  margin: 3px 2px 4px 1px;
  background: ${edge};
`;

const StatusBar = styled.footer`
  display: flex;
  align-items: flex-start;
  height: 19px;
  padding-left: 2px;
  border-top: 1px solid #d7d7d7;
  margin-top: 1px;
`;

const StatusCell = styled.span<{ $grow?: boolean; $width?: number; $plain?: boolean }>`
  flex: ${(p) => (p.$grow ? '1' : 'none')};
  width: ${(p) => (p.$width ? `${p.$width}px` : 'auto')};
  height: 18px;
  padding: ${(p) => (p.$grow ? '2px 0 0' : '2px 4px 0 3px')};
  border-left: ${(p) => (p.$plain ? 0 : 1)}px solid #d7d7d7;
`;

const Blocks = styled.span`
  display: flex;
  gap: 1px;
  padding: 3px 4px 0;
  border-left: 1px solid #d7d7d7;
`;

const Block = styled.i`
  width: 7px;
  height: 13px;
  border: 1px solid ${edge};
  border-right-color: #fff;
  border-bottom-color: #fff;
  box-shadow: inset 1px 1px #dcdcdc;
`;

/* ---------- schematic ---------- */

const PITCH = 9;
const gx = (i: number) => i * PITCH + 2;
const gy = (j: number) => j * PITCH + 8;

type Pt = [number, number];
const redWires: Pt[][] = [
  [[4, 16], [4, 6], [30, 6], [30, 11]],
  [[4, 22], [4, 27], [31, 27], [31, 19]],
  [[18, 11], [13, 11], [13, 19], [18, 19]],
  [[24, 11], [33, 11]],
  [[24, 19], [33, 19]],
  [[39, 11], [44, 11], [44, 19], [39, 19]],
  [[13, 14], [11, 14], [11, 36], [51, 36]],
  [[44, 15], [72, 15]],
  [[51, 15], [51, 27]],
  [[51, 32], [51, 39]],
  [[72, 19], [69, 19], [69, 34]],
  [[69, 38], [74, 38]],
  [[87, 38], [93, 38], [93, 30]],
  [[85, 15], [111, 15], [111, 26]],
  [[96, 15], [96, 28]],
  [[96, 33], [96, 36]],
  [[96, 41], [96, 45]],
  [[96, 44], [111, 44], [111, 31]],
];
const leads: Pt[][] = [
  [[72, 15], [74, 15]],
  [[72, 19], [74, 19]],
  [[83, 15], [85, 15]],
  [[67, 34], [69, 34]],
  [[67, 38], [69, 38]],
  [[74, 38], [76, 38]],
  [[85, 38], [87, 38]],
];
const joints: Pt[] = [[30, 11], [13, 14], [31, 19], [44, 15], [51, 15], [51, 36], [96, 15], [96, 44]];
const boxes: Pt[] = [[74, 14], [58, 33], [76, 37]];
const diodes: Pt[] = [[18, 11], [33, 11], [18, 19], [33, 19]];
const resistors: Pt[] = [[111, 26], [96, 28], [96, 36]];
const grounds: Pt[] = [[51, 39], [96, 45]];

type Label = [string, number, number];
const partLabels: Label[] = [
  ['V1', 58, 136], ['240Vrms', 57, 167], ['50Hz', 57, 182], ['0°', 57, 197],
  ['C1', 472, 260], ['100µF', 473, 276],
  ['R1', 873, 238], ['500kΩ', 872, 278], ['Key=A', 872, 293], ['0 %', 926, 285],
  ['R7', 872, 341], ['470Ω', 872, 357], ['R5', 1007, 251], ['2.5Ω', 1007, 267],
];
const diodeLabels: Label[] = [
  ['D6', 183, 91], ['D5', 318, 91], ['D2', 183, 163], ['D4', 318, 163],
  ['MUR805G', 158, 128], ['MUR805G', 293, 128], ['MUR805G', 158, 200], ['MUR805G', 293, 200],
];
const blockLabels: Label[] = [
  ['SC1', 697, 127], ['buck_1', 682, 201], ['SC2', 562, 298], ['pwm', 559, 372], ['SC3', 715, 334], ['comparator', 684, 408],
];
const pinLabels: Label[] = [
  ['vcc', 674, 145], ['output', 710, 145], ['drive', 674, 180], ['PWMOUT', 567, 315], ['FDBK', 578, 351], ['IO1', 693, 347], ['IO3', 743, 347],
];

const line = (pts: Pt[]) => 'M' + pts.map(([i, j]) => `${gx(i)} ${gy(j)}`).join('L');

const Drawing = styled.svg`
  display: block;
  width: 100%;
  height: 100%;
`;
const PartText = styled.text`
  font: bold 13px "Liberation Sans", sans-serif;
`;
const BlockText = styled.text`
  font: bold 13px "Liberation Mono", monospace;
`;
const PinText = styled.text`
  font: 9px "Liberation Mono", monospace;
`;
const RulerText = styled.text`
  font: 9px "Liberation Sans", sans-serif;
  fill: #808080;
  text-anchor: middle;
`;

function Schematic() {
  return (
    <Drawing role="img" aria-label="Buck converter schematic">
      <defs>
        <pattern id="dots" x="2" y="8" width="9" height="9" patternUnits="userSpaceOnUse">
          <rect width="1" height="1" fill="#909090" />
        </pattern>
        <pattern id="ticks" x="0" y="0" width="120" height="24" patternUnits="userSpaceOnUse">
          <rect width="1" height="24" fill="#808080" />
        </pattern>
      </defs>
      <rect width="100%" height="100%" fill="url(#dots)" />
      <rect x="100" width="100%" height="24" fill="url(#ticks)" />
      <rect y="24" width="100%" height="1" fill="#808080" />
      {[0, 1, 2, 3, 4, 5, 6, 7, 8].map((n) => (
        <RulerText key={n} x={58 + n * 120} y={14}>{n}</RulerText>
      ))}
      <g fill="none" stroke="#000" transform="translate(.5 .5)" shapeRendering="crispEdges">
        {redWires.map((w, i) => <path key={i} d={line(w)} stroke="#f00" />)}
        {leads.map((w, i) => <path key={i} d={line(w)} />)}
        {boxes.map(([i, j]) => <rect key={i} x={gx(i)} y={gy(j)} width="80" height="53" />)}
        {diodes.map(([i, j]) => (
          <g key={`${i}-${j}`} stroke="#00f" transform={`translate(${gx(i)} ${gy(j)})`}>
            <path d="M0 0H54 M31 -8V8" />
            <path d="M18 -9L31 0L18 9Z" fill="#00f" />
          </g>
        ))}
        {resistors.map(([i, j]) => (
          <path key={`${i}-${j}`} transform={`translate(${gx(i)} ${gy(j)})`} d="M0 0V9L4 11L-4 16L4 20L-4 25L4 29L-4 33L0 36V45" />
        ))}
        {grounds.map(([i, j]) => (
          <path key={i} transform={`translate(${gx(i)} ${gy(j)})`} d="M0 0V9 M-9 9H9 M-6 12H6 M-3 15H3" />
        ))}
        <g transform={`translate(${gx(4)} ${gy(19)})`}>
          <path d="M0 -27V-18 M0 18V27 M-3 -12H3 M0 -15V-9 M-3 12H3" />
          <path d="M-6 0L-3 -3H-2L2 3H3L6 0" />
        </g>
        <g transform={`translate(${gx(51)} ${gy(27)})`}>
          <path d="M0 0V18 M0 28V45 M-10 13H-4 M-7 10V16" />
          <path d="M-9 19H9 M-9 30L-6 28H6L9 30" strokeWidth="2" />
        </g>
        <path d={`M${gx(93)} ${gy(30)}h10l14 8`} />
      </g>
      <circle cx={gx(4) + 0.5} cy={gy(19) + 0.5} r="17.5" fill="none" stroke="#000" shapeRendering="crispEdges" />
      <path d={`M${gx(96) - 1} ${gy(31)}l-10 -1l3 -6z`} />
      {joints.map(([i, j]) => <circle key={`${i}-${j}`} cx={gx(i)} cy={gy(j)} r="2" fill="#f00" />)}
      {partLabels.map(([t, x, y]) => <PartText key={t} x={x} y={y}>{t}</PartText>)}
      {diodeLabels.map(([t, x, y]) => <PartText key={`${x}-${y}`} x={x} y={y} fill="#00f">{t}</PartText>)}
      {blockLabels.map(([t, x, y]) => <BlockText key={t} x={x} y={y}>{t}</BlockText>)}
      {pinLabels.map(([t, x, y]) => <PinText key={t} x={x} y={y}>{t}</PinText>)}
    </Drawing>
  );
}

/* ---------- page ---------- */

const menus = ['_File', '_Edit', '_View', '_Place', '_MCU', '_Simulate', 'Tra_nsfer', '_Tools', '_Reports', '_Options', '_Window', '_Help'];

function Mnemonic({ text }: { text: string }) {
  const at = text.indexOf('_');
  return (
    <>
      {text.slice(0, at)}
      <u>{text[at + 1]}</u>
      {text.slice(at + 2)}
    </>
  );
}

function Tools({ names, on }: { names: string[]; on?: string }) {
  return (
    <>
      {names.map((n, i) => {
        if (n === '|') return <Separator key={i} />;
        if (n === ' ') return <Gap key={i} />;
        return (
          <ToolButton key={i} aria-label={n} $on={n === on} $slim={n === 'caret'}>
            <Icon name={n} />
          </ToolButton>
        );
      })}
    </>
  );
}

const Arrow = ({ d }: { d: string }) => (
  <svg width="10" height="10" viewBox="0 0 10 10" aria-hidden="true">
    <path d={d} fill="none" stroke="#505050" strokeWidth="2" />
  </svg>
);

const instruments = ['multimeter', 'functionGen', 'wattmeter', 'scope2', 'scope4', 'bode', 'counter', 'wordGen', 'logicConv', 'logicAnalyzer', 'ivAnalyzer', 'distortion', 'spectrum', 'network', 'agGen', 'agMeter', 'agScope', 'tkScope'];

export default function App() {
  return (
    <Page>
      <Global />
      <MenuBar>
        <Icon name="sheet" />
        <MenuList>
          {menus.map((m) => <MenuItem key={m}><Mnemonic text={m} /></MenuItem>)}
        </MenuList>
        <WindowButtons>
          {['min', 'restore', 'close'].map((n) => <WindowButton key={n} aria-label={n}><Icon name={n} /></WindowButton>)}
        </WindowButtons>
      </MenuBar>

      <ToolRow>
        <Toolbar>
          <Tools names={['newFile', 'open', 'openBlue', 'save', '|', 'print', 'preview', '|', 'cut', 'copy', 'paste', '|', 'undo', 'redo']} />
        </Toolbar>
        <Toolbar>
          <Tools on="hierarchy" names={['hierarchy', 'grid', 'netlist', 'bom', 'grapher', ' ', 'calc', 'branch', '|', 'wizard', 'database']} />
          <SelectWrap>
            <PartSelect aria-label="In-use list"><option>--- In-Use List ---</option></PartSelect>
            <Chevron width="10" height="8" viewBox="0 0 10 8"><path d="M1 1.5L5 5.5L9 1.5" fill="none" stroke="currentColor" /></Chevron>
          </SelectWrap>
          <Tools names={['|', 'erc', 'toPcb', 'caret', 'backAnn', 'forwardAnn', 'caret', '|', 'find', 'web', 'help']} />
        </Toolbar>
        <Toolbar $gap={95} $lead={10}>
          <Tools names={['zoomIn', 'zoomOut', 'zoomArea', 'zoomFit', 'fullScreen']} />
        </Toolbar>
        <Toolbar $gap={20} $lead={10}>
          <Tools names={['wires', 'buses']} />
        </Toolbar>
      </ToolRow>

      <ToolRow>
        <Toolbar>
          <Tools names={['battery', 'resistor', 'diode', 'transistor', 'opamp', 'ttl', 'cmos', 'mixedPort', 'mixed', 'indicator', 'power', 'misc', 'peripheral', 'rf', 'motor', 'niBird', 'connector', '|', 'mcu', '|', 'hierBlock', 'bus']} />
        </Toolbar>
        <Toolbar>
          <Tools on="stop" names={['play', 'pause', 'stop']} />
          <TextButton><Icon name="wrench" />Interactive</TextButton>
        </Toolbar>
        <Toolbar>
          <Tools names={['probeV', 'probeA', 'probeW', 'probeDiff', 'probeVA', 'probeRef', 'probeDigital', 'gear']} />
        </Toolbar>
      </ToolRow>

      <Main>
        <Dock>
          <DockTitle>
            <DockName>Design Toolbox</DockName>
            <WindowButton aria-label="Collapse"><Icon name="up" /></WindowButton>
            <WindowButton aria-label="Close toolbox"><Icon name="close" /></WindowButton>
          </DockTitle>
          <DockBody>
            <DockTools>
              {['newSheet', 'open', 'save', 'blocksWindow', 'rename'].map((n) => <ToolButton key={n} aria-label={n}><Icon name={n} /></ToolButton>)}
              <Spacer />
              <ToolButton aria-label="history"><Icon name="history" /></ToolButton>
            </DockTools>
            <Tree>
              <Branch $depth={0}><Expander aria-label="Collapse project" /><Icon name="checkSheet" /><BranchName>buck converter (3)</BranchName></Branch>
              <Branch $depth={1}><Expander aria-label="Collapse design" /><Icon name="sheet" /><BranchName $on>buck converter (3)</BranchName></Branch>
              {['buck_1(SC1)', 'pwm(SC2)', 'comparator(SC3)'].map((n, i) => (
                <Branch key={n} $depth={2}><Elbow $last={i === 2} /><Icon name="subSheet" /><BranchName>{n}</BranchName></Branch>
              ))}
            </Tree>
          </DockBody>
          <BottomTabs>
            <DockTab $on>Hierarchy</DockTab>
            <DockTab>Visibility</DockTab>
            <DockTab>Project View</DockTab>
          </BottomTabs>
        </Dock>

        <Workspace>
          <DocFrame>
            <DocWindow>
              <Viewport>
                <Backdrop />
                <Sheet><Schematic /></Sheet>
              </Viewport>
              <ScrollBar>
                <ScrollArrow aria-label="Scroll up"><Arrow d="M1 7L5 3L9 7" /></ScrollArrow>
                <Thumb $share={282} />
                <Thumb $share={235} $empty />
                <ScrollArrow aria-label="Scroll down"><Arrow d="M1 3L5 7L9 3" /></ScrollArrow>
              </ScrollBar>
              <ScrollBar $row>
                <ScrollArrow aria-label="Scroll left"><Arrow d="M7 1L3 5L7 9" /></ScrollArrow>
                <Thumb $share={171} $empty />
                <Thumb $share={859} />
                <Thumb $share={49} $empty />
                <ScrollArrow aria-label="Scroll right"><Arrow d="M3 1L7 5L3 9" /></ScrollArrow>
              </ScrollBar>
            </DocWindow>
          </DocFrame>
          <DocTabs>
            <DocTab $on><Icon name="sheet" />buck converter (3) *</DocTab>
            <DocTab><Icon name="sheet" />comparator(SC3)</DocTab>
            <DocTab><Icon name="sheet" />buck_1(SC1)</DocTab>
            <CornerButton aria-label="Cascade"><Icon name="cascade" /></CornerButton>
          </DocTabs>
        </Workspace>

        <Instruments>
          <InstrumentStrip>
            {instruments.map((n) => <InstrumentButton key={n} aria-label={n}><Icon name={n} /></InstrumentButton>)}
            <StripRule />
            <InstrumentButton aria-label="LabVIEW"><Icon name="labview" /></InstrumentButton>
            <InstrumentButton $short aria-label="More LabVIEW"><Icon name="rightDark" /></InstrumentButton>
            <StripRule />
            <InstrumentButton aria-label="ELVISmx"><Icon name="clampDim" /></InstrumentButton>
            <InstrumentButton $short aria-label="More ELVISmx"><Icon name="rightDim" /></InstrumentButton>
            <StripRule />
            <InstrumentButton aria-label="Current clamp"><Icon name="currentClamp" /></InstrumentButton>
          </InstrumentStrip>
        </Instruments>
      </Main>

      <StatusBar>
        <StatusCell $grow $plain>For Help, press F1</StatusCell>
        <StatusCell $width={151} $plain>-</StatusCell>
        <StatusCell $width={183} />
        <StatusCell $width={183}>-</StatusCell>
        <Blocks>{[0, 1, 2, 3, 4, 5, 6].map((n) => <Block key={n} />)}</Blocks>
      </StatusBar>
    </Page>
  );
}
